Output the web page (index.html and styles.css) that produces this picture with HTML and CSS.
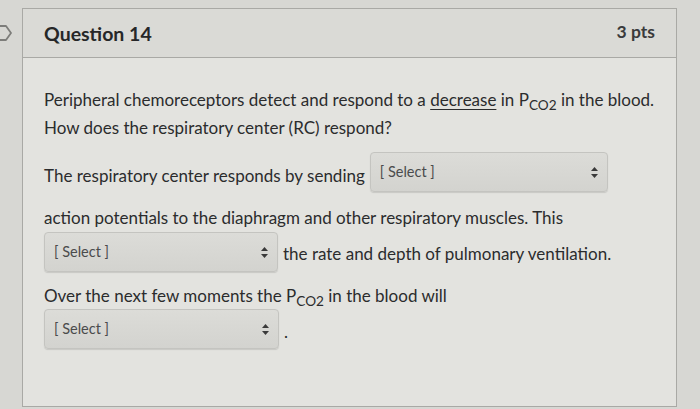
FILE: index.html
```html
<!DOCTYPE html>
<html lang="en">
<head>
<meta charset="utf-8">
<title>Question 14</title>
<link rel="stylesheet" href="styles.css">
</head>
<body>
<div class="page">
  <div class="gutter">
    <svg class="flag" width="14" height="18" viewBox="0 0 14 18" aria-hidden="true">
      <path d="M-4 2 H6 L11 9 L6 16 H-4" fill="none" stroke="#7d7d7a" stroke-width="1.8" stroke-linejoin="round"/>
    </svg>
  </div>
  <div class="card">
    <div class="card-header">
      <span class="title">Question 14</span>
      <span class="pts">3 pts</span>
    </div>
    <div class="card-body">
      <p class="intro">Peripheral chemoreceptors detect and respond to a <u>decrease</u> in P<sub>CO2</sub> in the blood.<br>How does the respiratory center (RC) respond?</p>
      <div class="row row-1">
        <span class="txt">The respiratory center responds by sending</span>
        <span class="select sel-1"><span class="sel-text">[ Select ]</span><svg class="arrows" width="7" height="11" viewBox="0 0 7 11"><path d="M3.5 0 L7 4 H0 Z M0 7 H7 L3.5 11 Z" fill="#3a3a3a"/></svg></span>
      </div>
      <p class="line line-2">action potentials to the diaphragm and other respiratory muscles. This</p>
      <div class="row row-2">
        <span class="select sel-2"><span class="sel-text">[ Select ]</span><svg class="arrows" width="7" height="11" viewBox="0 0 7 11"><path d="M3.5 0 L7 4 H0 Z M0 7 H7 L3.5 11 Z" fill="#3a3a3a"/></svg></span>
        <span class="txt">the rate and depth of pulmonary ventilation.</span>
      </div>
      <p class="line line-3">Over the next few moments the P<sub>CO2</sub> in the blood will</p>
      <div class="row row-3">
        <span class="select sel-3"><span class="sel-text">[ Select ]</span><svg class="arrows" width="7" height="11" viewBox="0 0 7 11"><path d="M3.5 0 L7 4 H0 Z M0 7 H7 L3.5 11 Z" fill="#3a3a3a"/></svg></span>
        <span class="txt">.</span>
      </div>
    </div>
  </div>
</div>
</body>
</html>
```
FILE: styles.css
```css
html, body {
  margin: 0;
  padding: 0;
}
body {
  background: #d7d7d3;
  font-family: Lato, "Open Sans", sans-serif;
  color: #2b2c2d;
  width: 700px;
  height: 409px;
  overflow: hidden;
}
.page {
  display: flex;
  padding-top: 8px;
}
.gutter {
  width: 22px;
  flex: 0 0 22px;
}
.flag {
  display: block;
  margin-top: 16px;
}
.card {
  width: 653px;
  height: 397px;
  border: 1px solid #a9a9a5;
  background: #e3e3df;
}
.card-header {
  height: 48px;
  display: flex;
  justify-content: space-between;
  align-items: center;
  padding: 0 21px;
  background: #dadad6;
  border-bottom: 1px solid #a9a9a5;
}
.title {
  font-size: 19.5px;
  font-weight: 700;
  color: #262728;
}
.pts {
  font-size: 17.5px;
  font-weight: 700;
  color: #3a3b3c;
  margin-top: -4px;
}
.card-body {
  padding: 28px 21px 0 21px;
  font-size: 17px;
}
.intro {
  margin: 0;
  line-height: 28px;
}
sub {
  font-size: 0.8em;
  vertical-align: -0.3em;
  line-height: 0;
}
u {
  text-decoration-thickness: 1px;
  text-underline-offset: 3px;
}
.row {
  display: flex;
  align-items: flex-end;
  line-height: 28px;
}
.row-1 {
  margin-top: 10px;
}
.row-1 .txt {
  margin-bottom: 2px;
}
.row-1 .select {
  margin-left: 5px;
}
.row-2 .select,
.row-3 .select {
  margin-right: 5px;
}
.row-2 .txt {
  margin-bottom: 4px;
}
.row-3 .txt {
  margin-bottom: 3px;
}
.line {
  margin: 0;
  line-height: 28px;
}
.line-2 {
  margin-top: 12px;
}
.line-3 {
  margin-top: 10px;
  line-height: 27px;
}
.select {
  display: inline-flex;
  align-items: center;
  justify-content: space-between;
  box-sizing: border-box;
  height: 40px;
  padding: 0 9px 0 9px;
  border: 1px solid #c4c4c0;
  border-radius: 4px;
  background: linear-gradient(#dcdcd8, #d3d3cf);
  box-shadow: 0 1px 1px rgba(0, 0, 0, 0.12);
  font-size: 14.5px;
  color: #4a4b4c;
}
.sel-1 { width: 238px; }
.sel-2 { width: 234px; }
.sel-3 { width: 235px; }
.sel-text {
  line-height: 20px;
}
.arrows {
  display: block;
}
```
